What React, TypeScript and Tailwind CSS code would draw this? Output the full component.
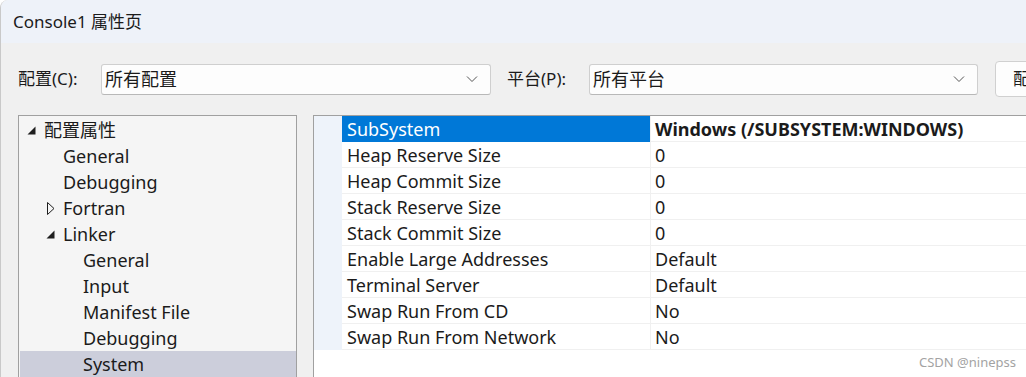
import React from "react";

const font = { fontFamily: '"Noto Sans", "Noto Sans CJK SC", sans-serif' };

type Node = { label: string; level: number; toggle?: "open" | "closed"; selected?: boolean };

const tree: Node[] = [
  { label: "配置属性", level: 0, toggle: "open" },
  { label: "General", level: 1 },
  { label: "Debugging", level: 1 },
  { label: "Fortran", level: 1, toggle: "closed" },
  { label: "Linker", level: 1, toggle: "open" },
  { label: "General", level: 2 },
  { label: "Input", level: 2 },
  { label: "Manifest File", level: 2 },
  { label: "Debugging", level: 2 },
  { label: "System", level: 2, selected: true },
];

const props: [string, string][] = [
  ["SubSystem", "Windows (/SUBSYSTEM:WINDOWS)"],
  ["Heap Reserve Size", "0"],
  ["Heap Commit Size", "0"],
  ["Stack Reserve Size", "0"],
  ["Stack Commit Size", "0"],
  ["Enable Large Addresses", "Default"],
  ["Terminal Server", "Default"],
  ["Swap Run From CD", "No"],
  ["Swap Run From Network", "No"],
];

function Chevron() {
  return (
    <svg width="12" height="8" viewBox="0 0 12 8" className="shrink-0">
      <path d="M1 1.5 L6 6.5 L11 1.5" fill="none" stroke="#555" strokeWidth="1" />
    </svg>
  );
}

function Toggle({ kind }: { kind: "open" | "closed" }) {
  if (kind === "open") {
    return (
      <svg width="9" height="9" viewBox="0 0 9 9">
        <path d="M8.5 0.5 L8.5 8.5 L0.5 8.5 Z" fill="#1e1e1e" />
      </svg>
    );
  }
  return (
    <svg width="8" height="13" viewBox="0 0 8 13">
      <path d="M0.5 0.5 L7 6.5 L0.5 12.5 Z" fill="none" stroke="#1e1e1e" strokeWidth="1" />
    </svg>
  );
}

function Dropdown({ value, width }: { value: string; width: string }) {
  return (
    <div
      className={`${width} shrink-0 h-[31px] bg-[#fdfdfd] border border-[#cfcfcf] border-b-[#b8b8b8] rounded-[3px] flex items-center pl-[3px] pr-[12px] justify-between`}
    >
      <span className="text-[18px] text-[#1b1b1b]">{value}</span>
      <Chevron />
    </div>
  );
}

export default function App() {
  return (
    <div
      style={font}
      className="w-[1026px] h-[377px] overflow-hidden bg-[#f0f0f0] border-l border-[#c9c9c9] rounded-tl-[8px] text-[#1b1b1b]"
    >
      <div className="h-[43px] bg-[#eef2f9] pl-[12px] flex items-center text-[17px] text-[#1b1b1b]">
        Console1 属性页
      </div>

      <div className="flex items-center h-[52px] pt-[20px] whitespace-nowrap">
        <span className="ml-[17px] w-[83px] shrink-0 text-[17px]">配置(C):</span>
        <Dropdown value="所有配置" width="w-[390px]" />
        <span className="ml-[16px] w-[82px] shrink-0 text-[17px]">平台(P):</span>
        <Dropdown value="所有平台" width="w-[389px]" />
        <div className="ml-[17px] h-[36px] w-[80px] shrink-0 bg-[#fdfdfd] border border-[#d0d0d0] rounded-[4px] pl-[17px] flex items-center text-[17px]">
          配置管理器
        </div>
      </div>

      <div className="flex mt-[20px]">
        <div className="ml-[17px] w-[279px] shrink-0 h-[300px] bg-[#f5f5f5] border border-[#a0a0a0] p-[1px] pr-0">
          {tree.map((n, i) => (
            <div
              key={i}
              className={`h-[26px] flex items-center text-[18px] ${n.selected ? "bg-[#cccedb]" : ""}`}
            >
              <div
                className={`flex items-center justify-end pr-[8px] shrink-0 ${
                  n.level === 0 ? "w-[24px]" : n.level === 1 ? "w-[43px]" : "w-[63px]"
                }`}
              >
                {n.toggle && <Toggle kind={n.toggle} />}
              </div>
              <span>{n.label}</span>
            </div>
          ))}
        </div>

        <div className="ml-[16px] flex-1 h-[300px] bg-white border-t border-l border-[#a0a0a0] relative">
          {props.map(([name, value], i) => (
            <div key={i} className="flex h-[26px] text-[18px] whitespace-nowrap">
              <div className="w-[28px] shrink-0 bg-[#eef3fa]" />
              <div
                className={`w-[308px] shrink-0 pl-[5px] pt-[2px] flex items-center border-b ${
                  i === 0 ? "bg-[#0078d7] text-white border-[#0078d7]" : "border-[#f0f0f0]"
                }`}
              >
                {name}
              </div>
              <div
                className={`flex-1 pl-[4px] pt-[2px] flex items-center border-l border-b border-[#f0f0f0] ${
                  i === 0 ? "font-bold" : ""
                }`}
              >
                {value}
              </div>
            </div>
          ))}
          <div className="absolute left-[605px] top-[237px] text-[13px] text-[#a3a3a3]">
            CSDN @ninepss
          </div>
        </div>
      </div>
    </div>
  );
}
